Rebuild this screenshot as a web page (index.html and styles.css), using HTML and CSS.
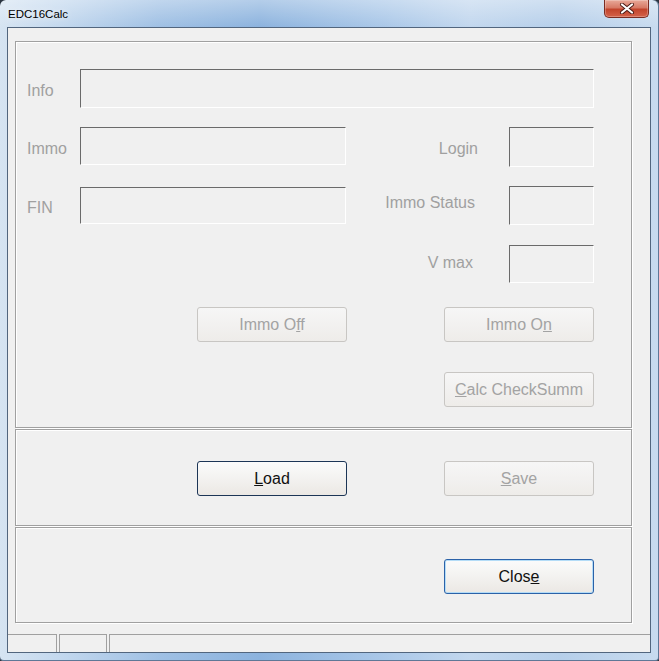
FILE: index.html
```html
<!DOCTYPE html>
<html lang="en">
<head>
    <meta charset="UTF-8">
    <meta name="viewport" content="width=device-width, initial-scale=1.0">
    <title>EDC16Calc</title>
    <link rel="stylesheet" href="styles.css">
</head>
<body>
    <div class="window">
        <div class="titlebar">
            <span class="title">EDC16Calc</span>
            <div class="close-x">
                <svg width="16" height="11" viewBox="0 0 16 11">
                    <path d="M3 1.5 L13 9.5 M13 1.5 L3 9.5" stroke="#4a1a14" stroke-width="4" stroke-linecap="round"/>
                    <path d="M3 1.5 L13 9.5 M13 1.5 L3 9.5" stroke="#ffffff" stroke-width="2.2" stroke-linecap="round"/>
                </svg>
            </div>
        </div>
        <div class="client">
            <div class="group group-main">
                <div class="row row-info">
                    <label class="lbl">Info</label>
                    <div class="field field-info"></div>
                </div>
                <div class="row row-2">
                    <label class="lbl">Immo</label>
                    <div class="field field-left"></div>
                    <label class="lbl lbl-right">Login</label>
                    <div class="field field-right field-tall"></div>
                </div>
                <div class="row row-3">
                    <label class="lbl">FIN</label>
                    <div class="field field-left field-fin"></div>
                    <label class="lbl lbl-right lbl-status">Immo Status</label>
                    <div class="field field-right"></div>
                </div>
                <div class="row row-4">
                    <label class="lbl lbl-right lbl-vmax">V max</label>
                    <div class="field field-right field-vmax"></div>
                </div>
                <div class="btn-row row-5">
                    <button class="btn" disabled>Immo O<u>f</u>f</button>
                    <button class="btn" disabled>Immo O<u>n</u></button>
                </div>
                <div class="btn-row btn-row-right row-6">
                    <button class="btn" disabled><u>C</u>alc CheckSumm</button>
                </div>
            </div>
            <div class="group group-file">
                <div class="btn-row">
                    <button class="btn btn-focus"><u>L</u>oad</button>
                    <button class="btn" disabled><u>S</u>ave</button>
                </div>
            </div>
            <div class="group group-close">
                <div class="btn-row btn-row-right">
                    <button class="btn btn-default">Clos<u>e</u></button>
                </div>
            </div>
            <div class="statusbar">
                <div class="panel panel-1"></div>
                <div class="panel panel-2"></div>
                <div class="panel panel-3"></div>
            </div>
        </div>
    </div>
</body>
</html>
```

FILE: styles.css
```css
html, body {
    margin: 0;
    padding: 0;
    background: #2b3440;
}
.window {
    width: 659px;
    height: 661px;
    box-sizing: border-box;
    padding: 0 8px 8px 7px;
    display: flex;
    flex-direction: column;
    background:
        linear-gradient(180deg, rgba(255,255,255,0.35) 0, rgba(255,255,255,0) 27px),
        linear-gradient(90deg, #d6e4f2 0, #c3d8ee 60px, #9fc0e4 160px, #8cb3de 260px, #a9c7e8 380px, #c2d7ee 470px, #b6cfea 560px, #c8dbef 659px);
    border-radius: 6px 6px 4px 4px;
    box-shadow: inset 0 -1px 0 #5e7897, inset -1px 0 0 #5e7897;
}
.titlebar {
    height: 27px;
    flex: none;
    display: flex;
    align-items: flex-start;
    justify-content: space-between;
}
.title {
    font-family: "Liberation Sans", Arial, sans-serif;
    font-size: 11.5px;
    color: #000;
    margin: 8px 0 0 1px;
    text-shadow: 0 0 6px rgba(255,255,255,0.9);
}
.close-x {
    width: 45px;
    height: 18px;
    margin-right: 2px;
    box-sizing: border-box;
    border: 1px solid #7a2c22;
    border-top: none;
    border-radius: 0 0 5px 5px;
    background: linear-gradient(180deg, #e8a999 0, #d77a66 45%, #c2442c 55%, #d4624a 100%);
    display: flex;
    align-items: center;
    justify-content: center;
    box-shadow: inset 0 0 0 1px rgba(255,255,255,0.25);
}
.client {
    flex: 1;
    background: #f0f0f0;
    border: 1px solid #52667e;
    display: flex;
    flex-direction: column;
    padding: 13px 0 0 7px;
    font-family: "Liberation Sans", Arial, sans-serif;
    font-size: 16px;
}
.group {
    width: 617px;
    box-sizing: border-box;
    border: 1px solid #a0a0a0;
    box-shadow: inset 1px 1px 0 #fff, 1px 1px 0 #fff;
    flex: none;
}
.group-main {
    height: 387px;
    padding-left: 11px;
}
.group-file {
    height: 97px;
    margin-top: 1px;
}
.group-close {
    height: 96px;
    margin-top: 1px;
}
.row {
    display: flex;
    align-items: flex-start;
}
.row-info { margin-top: 27px; }
.row-2 { margin-top: 19px; }
.row-3 { margin-top: 19px; }
.row-4 { margin-top: 20px; }
.lbl {
    width: 53px;
    flex: none;
    box-sizing: border-box;
    color: #a0a0a0;
    line-height: 18px;
    margin-top: 13px;
}
.lbl-right {
    width: 132px;
    text-align: right;
    margin-right: 31px;
    padding-right: 0;
}
.lbl-status {
    margin-top: 8px;
    padding-right: 3px;
}
.lbl-vmax {
    margin-left: 319px;
    margin-top: 9px;
    padding-right: 5px;
}
.field {
    box-sizing: border-box;
    background: #f0f0f0;
    border-top: 1px solid #6a6a6a;
    border-left: 1px solid #6a6a6a;
    border-bottom: 1px solid #fff;
    border-right: 1px solid #fff;
    height: 39px;
}
.field-info { width: 514px; }
.field-left { width: 266px; height: 38px; }
.field-fin { margin-top: 1px; height: 37px; }
.field-right { width: 85px; }
.field-tall { height: 40px; }
.field-vmax { height: 38px; }
.btn-row {
    display: flex;
    gap: 97px;
    padding-left: 181px;
    margin-top: 31px;
}
.group-main .btn-row { padding-left: 170px; }
.row-5 { margin-top: 24px; }
.row-6 { margin-top: 30px; }
.btn-row-right { padding-left: 428px; }
.group-main .btn-row-right { padding-left: 417px; }
.btn {
    width: 150px;
    height: 35px;
    box-sizing: border-box;
    font-family: "Liberation Sans", Arial, sans-serif;
    font-size: 16px;
    color: #111;
    border: 1px solid #707070;
    border-radius: 3px;
    background: linear-gradient(180deg, #fbfbfb 0, #f3f2f0 50%, #ebe8e4 100%);
    padding: 0;
}
.btn:disabled {
    color: #a3a3a3;
    border-color: #c8c6c3;
    background: linear-gradient(180deg, #f6f6f6 0, #f2f1f0 50%, #eeece9 100%);
}
.btn-focus {
    border-color: #1c3556;
}
.btn-default {
    border-color: #2b62a8;
    box-shadow: inset 0 0 0 1px #b4dcf7;
}
.statusbar {
    display: flex;
    gap: 2px;
    margin: 11px 0 0 -7px;
    flex: 1;
}
.panel {
    box-sizing: border-box;
    border-top: 1px solid #a0a0a0;
    border-left: 1px solid #a0a0a0;
    border-right: 1px solid #a0a0a0;
}
.panel-1 { width: 49px; border-left: none; }
.panel-2 { width: 48px; }
.panel-3 { flex: 1; border-right: none; }
```
